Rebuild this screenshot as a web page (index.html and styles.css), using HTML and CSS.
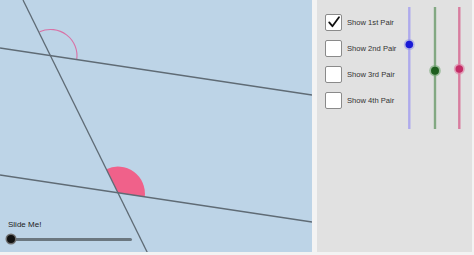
FILE: index.html
```html
<!DOCTYPE html>
<html>
<head>
<meta charset="utf-8">
<link rel="stylesheet" href="styles.css">
</head>
<body>
<div class="app">
  <div class="canvas">
    <svg class="board" width="312" height="252" viewBox="0 0 312 252">
      <path class="arc" d="M 39.6 31.8 A 26.5 26.5 0 0 1 76.7 60" />
      <path class="sector" d="M 118 193 L 106.3 169.2 A 27 27 0 0 1 144.7 197.1 Z" />
      <line class="ln" x1="23" y1="0" x2="152" y2="262" />
      <line class="ln" x1="0" y1="48" x2="312" y2="95" />
      <line class="ln" x1="0" y1="175" x2="312" y2="222" />
    </svg>
    <div class="slider">
      <div class="slider-label">Slide Me!</div>
      <div class="track"><span class="knob"></span></div>
    </div>
  </div>
  <div class="panel">
    <div class="checks">
      <label class="row"><span class="box"><svg width="14" height="14" viewBox="0 0 14 14"><path d="M2.2 7.4 L5.4 11.2 L12 2.2" fill="none" stroke="#111" stroke-width="1.8" stroke-linecap="round" stroke-linejoin="round"/></svg></span><span class="txt">Show 1st Pair</span></label>
      <label class="row"><span class="box"></span><span class="txt">Show 2nd Pair</span></label>
      <label class="row"><span class="box"></span><span class="txt">Show 3rd Pair</span></label>
      <label class="row"><span class="box"></span><span class="txt">Show 4th Pair</span></label>
    </div>
    <svg class="vsliders" width="77" height="252" viewBox="0 0 77 252">
      <line x1="14.3" y1="7" x2="14.3" y2="129" stroke="#aeaaec" stroke-width="2.4"/>
      <line x1="40" y1="7" x2="40" y2="129" stroke="#82a882" stroke-width="2.4"/>
      <line x1="64.3" y1="7" x2="64.3" y2="129" stroke="#d97c9f" stroke-width="2.4"/>
      <circle cx="14.3" cy="44.5" r="5.5" fill="#9090e6" opacity="0.5"/>
      <circle cx="14.3" cy="44.5" r="3.8" fill="#1a1ad6"/>
      <circle cx="40" cy="70.7" r="5.8" fill="#6ea46e" opacity="0.6"/>
      <circle cx="40" cy="70.7" r="4" fill="#1e5e1e"/>
      <circle cx="64.3" cy="69" r="5.5" fill="#e07aa0" opacity="0.6"/>
      <circle cx="64.3" cy="69" r="3.8" fill="#c42c66"/>
    </svg>
  </div>
</div>
</body>
</html>
```
FILE: styles.css
```css
html, body {
  margin: 0;
  padding: 0;
  background: #f3f3f3;
}
body {
  width: 474px;
  height: 255px;
  overflow: hidden;
  font-family: "Liberation Sans", Arial, sans-serif;
}
.app {
  display: flex;
  gap: 5px;
  height: 252px;
}
.canvas {
  position: relative;
  width: 312px;
  height: 252px;
  background: #bdd4e7;
  flex: none;
}
.board {
  display: block;
}
.ln {
  stroke: #5f6b75;
  stroke-width: 1.3;
}
.arc {
  fill: none;
  stroke: #d872a6;
  stroke-width: 1.1;
}
.sector {
  fill: #f0618a;
}
.slider {
  position: absolute;
  left: 8px;
  top: 220px;
}
.slider-label {
  font-size: 8px;
  color: #222;
  line-height: 10px;
}
.track {
  position: relative;
  margin-top: 8px;
  margin-left: 4px;
  width: 120px;
  height: 3px;
  background: #6b7780;
  border-radius: 2px;
}
.knob {
  position: absolute;
  left: -5px;
  top: -3.5px;
  width: 8px;
  height: 8px;
  border-radius: 50%;
  background: #111;
  box-shadow: 0 0 0 1.5px #6e6e6e;
}
.panel {
  flex: none;
  width: 155px;
  height: 252px;
  background: #e1e1e1;
  display: flex;
}
.checks {
  width: 70px;
  padding: 14px 0 0 8px;
  display: flex;
  flex-direction: column;
  gap: 10px;
}
.row {
  display: flex;
  align-items: center;
  gap: 5px;
  height: 16px;
}
.box {
  flex: none;
  width: 15px;
  height: 15px;
  border: 1px solid #8a8a8a;
  border-radius: 2px;
  background: #fff;
  display: flex;
  align-items: center;
  justify-content: center;
}
.txt {
  font-size: 7.6px;
  color: #333;
  white-space: nowrap;
}
.vsliders {
  display: block;
}
```
